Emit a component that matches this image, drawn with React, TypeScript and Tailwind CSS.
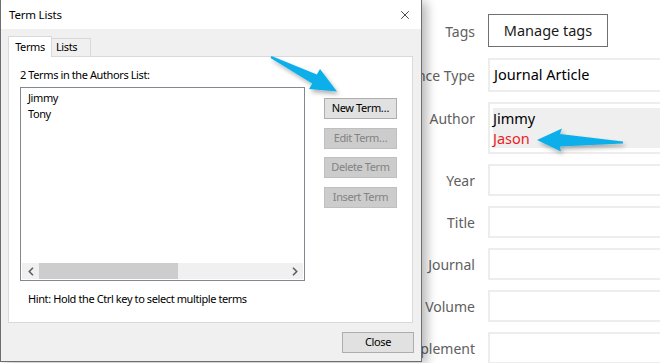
import { X } from "lucide-react"

type Row = { label: string; h: number; kind: "button" | "text" | "author" | "empty"; value?: string }

const rows: Row[] = [
  { label: "Tags", h: 34, kind: "button", value: "Manage tags" },
  { label: "Reference Type", h: 34, kind: "text", value: "Journal Article" },
  { label: "Author", h: 52, kind: "author" },
  { label: "Year", h: 32, kind: "empty" },
  { label: "Title", h: 32, kind: "empty" },
  { label: "Journal", h: 32, kind: "empty" },
  { label: "Volume", h: 32, kind: "empty" },
  { label: "Supplement", h: 32, kind: "empty" },
]

const termButtons = [
  { label: "New Term…", enabled: true },
  { label: "Edit Term…", enabled: false },
  { label: "Delete Term", enabled: false },
  { label: "Insert Term", enabled: false },
]

const Chevron = ({ dir }: { dir: "left" | "right" }) => (
  <svg width="6" height="9" viewBox="0 0 6 9">
    <path
      d={dir === "left" ? "M5 0.8 L1.3 4.5 L5 8.2" : "M1 0.8 L4.7 4.5 L1 8.2"}
      fill="none"
      stroke="#606060"
      strokeWidth="1.6"
    />
  </svg>
)

const ReferenceForm = () => (
  <div className="flex flex-col gap-[10px] pt-[14px] font-['Noto_Sans',sans-serif] text-[14px]">
    {rows.map((row) => (
      <div key={row.label} className="flex items-start">
        <div
          className={`flex w-[475px] shrink-0 items-center justify-end text-[#606060] ${row.kind === "button" || row.kind === "text" ? "h-[34px]" : "h-[32px]"}`}
        >
          {row.label}
        </div>
        <div className="ml-[13px]">
          {row.kind === "button" && (
            <div className="flex h-[33px] w-[120px] items-center justify-center border border-[#707070] bg-white text-[14.5px] text-[#1a1a1a]">
              {row.value}
            </div>
          )}
          {row.kind === "text" && (
            <div className="flex h-[34px] w-[300px] items-center border-2 border-[#ededed] pl-[4px] text-[14.5px] text-black">
              {row.value}
            </div>
          )}
          {row.kind === "author" && (
            <div className="h-[52px] w-[300px] border-2 border-[#ededed] px-[3px] py-[4px]">
              <div className="flex h-[40px] flex-col bg-[#efefef] text-[14.5px] leading-[20px]">
                <span className="text-black">Jimmy</span>
                <span className="text-[#ec1c24]">Jason</span>
              </div>
            </div>
          )}
          {row.kind === "empty" && (
            <div className="h-[32px] w-[300px] border-2 border-[#ededed]" />
          )}
        </div>
      </div>
    ))}
  </div>
)

const TermListsDialog = () => (
  <div className="absolute left-0 top-0 flex h-[362px] w-[422px] flex-col border-x border-b border-[#6e6e6e] bg-[#f0f0f0] font-['Noto_Sans',sans-serif] text-[11px] tracking-[-0.4px] text-black shadow-[5px_2px_10px_rgba(0,0,0,0.28)]">
    {/* Title bar */}
    <div className="flex h-[29px] shrink-0 items-center justify-between bg-white pl-[8px] pr-[8px]">
      <span className="text-[11.5px] tracking-[-0.2px]">Term Lists</span>
      <X size={14} strokeWidth={1.2} className="mr-[1px] text-black" />
    </div>

    <div className="flex flex-1 flex-col px-[7px] pt-[7px]">
      {/* Tabs */}
      <div className="flex h-[20px] items-end">
        <div className="relative z-10 -mb-px flex h-[21px] w-[44px] items-center justify-center border border-b-0 border-[#d9d9d9] bg-white">
          Terms
        </div>
        <div className="flex h-[18px] w-[39px] items-center border border-b-0 border-l-0 border-[#d9d9d9] pl-[4px]">
          Lists
        </div>
      </div>

      {/* Panel */}
      <div className="flex h-[267px] w-[405px] flex-col border border-[#d9d9d9] bg-white pl-[11px] pt-[10px]">
        <div className="h-[16px] leading-[16px]">2 Terms in the Authors List:</div>
        <div className="mt-[4px] flex">
          <div className="flex h-[194px] w-[285px] flex-col border border-[#828790] bg-white">
            <div className="flex flex-1 flex-col pl-[7px] pt-[2px] leading-[16px]">
              <span>Jimmy</span>
              <span>Tony</span>
            </div>
            <div className="mb-[1px] ml-[1px] mr-[1px] flex h-[16px] items-center bg-[#f0f0f0]">
              <div className="flex h-full w-[17px] items-center justify-center">
                <Chevron dir="left" />
              </div>
              <div className="h-full w-[139px] bg-[#cdcdcd]" />
              <div className="flex-1" />
              <div className="flex h-full w-[17px] items-center justify-center">
                <Chevron dir="right" />
              </div>
            </div>
          </div>
          <div className="ml-[19px] mt-[11px] flex flex-col gap-[8.5px]">
            {termButtons.map((b) => (
              <div
                key={b.label}
                className={`flex h-[21px] w-[73px] items-center justify-center border ${b.enabled ? "border-[#adadad] bg-[#e1e1e1] text-black" : "border-[#bfbfbf] bg-[#cccccc] text-[#838383]"}`}
              >
                {b.label}
              </div>
            ))}
          </div>
        </div>
        <div className="ml-[8px] mt-[10px] h-[16px] leading-[16px]">
          Hint: Hold the Ctrl key to select multiple terms
        </div>
      </div>

      <div className="mt-[9px] flex justify-end">
        <div className="flex h-[21px] w-[72px] items-center justify-center border border-[#adadad] bg-[#e1e1e1]">
          Close
        </div>
      </div>
    </div>
  </div>
)

const Callouts = () => (
  <svg className="pointer-events-none absolute left-0 top-0" width="660" height="363" viewBox="0 0 660 363">
    <defs>
      <filter id="arrowShadow" x="-20%" y="-40%" width="140%" height="180%">
        <feDropShadow dx="2" dy="3" stdDeviation="2" floodColor="#000" floodOpacity="0.3" />
      </filter>
    </defs>
    <g fill="#0cafea" filter="url(#arrowShadow)">
      <polygon points="271.5,56 316.8,74.5 320,69 337,91.5 309,89 312.2,83.5 270.5,58" />
      <polygon points="623,141.5 560,134 562,128.5 537,140 561,151.5 560,146.5 623,143.5" />
    </g>
  </svg>
)

export default function App() {
  return (
    <div className="relative h-[363px] w-[660px] overflow-hidden bg-white">
      <ReferenceForm />
      <TermListsDialog />
      <Callouts />
    </div>
  )
}
